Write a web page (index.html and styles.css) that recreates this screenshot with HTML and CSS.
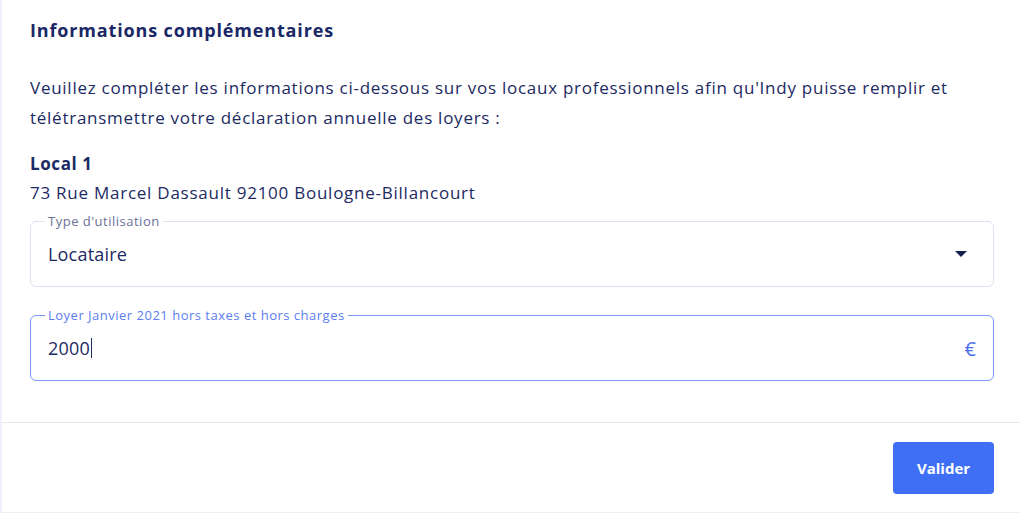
FILE: index.html
```html
<!DOCTYPE html>
<html lang="fr">
<head>
<meta charset="utf-8">
<title>Informations complémentaires</title>
<link rel="stylesheet" href="styles.css">
</head>
<body>
<div class="dialog">
  <div class="content">
    <h2 class="title">Informations complémentaires</h2>
    <p class="intro">Veuillez compléter les informations ci-dessous sur vos locaux professionnels afin qu'Indy puisse remplir et télétransmettre votre déclaration annuelle des loyers :</p>
    <div class="local">
      <div class="local-name">Local 1</div>
      <div class="local-address">73 Rue Marcel Dassault 92100 Boulogne-Billancourt</div>
    </div>
    <div class="field">
      <span class="field-label">Type d'utilisation</span>
      <span class="field-value">Locataire</span>
      <svg class="caret" width="12" height="6" viewBox="0 0 12 6"><path d="M0 0h12L6 6z" fill="#14204f"/></svg>
    </div>
    <div class="field field-active">
      <span class="field-label">Loyer Janvier 2021 hors taxes et hors charges</span>
      <span class="field-value">2000<span class="cursor"></span></span>
      <span class="euro">€</span>
    </div>
  </div>
  <div class="footer">
    <button class="btn">Valider</button>
  </div>
</div>
</body>
</html>
```
FILE: styles.css
```css
* { box-sizing: border-box; }
html, body { margin: 0; padding: 0; background: #fff; }
body {
  font-family: "Open Sans", "Noto Sans", sans-serif;
  color: #1c2a63;
  width: 1020px;
  height: 514px;
  overflow: hidden;
}
.dialog {
  height: 513px;
  border-left: 2px solid #eff0fb;
  border-bottom: 1px solid #eeeff6;
  display: flex;
  flex-direction: column;
}
.content {
  padding: 16px 26px 0 28px;
  height: 423px;
  border-bottom: 1px solid #e6e7f1;
}
.title {
  margin: 0;
  font-size: 18px;
  font-weight: 700;
  line-height: 28px;
  letter-spacing: 0.85px;
  color: #1a2766;
}
.intro {
  margin: 29px 0 0;
  font-size: 17px;
  line-height: 30px;
  letter-spacing: 0.74px;
  font-weight: 500;
}
.local { margin-top: 18px; font-size: 17px; line-height: 28px; letter-spacing: 0.75px; }
.local-name { font-weight: 700; line-height: 26px; letter-spacing: 0.6px; }
.local-address { margin-top: 2px; }
.field {
  position: relative;
  margin-top: 14px;
  padding: 0 17px 0 17px;
  border: 1px solid #dcdff0;
  border-radius: 6px;
  height: 66px;
  display: flex;
  align-items: center;
  justify-content: space-between;
}
.field + .field { margin-top: 28px; }
.field-label {
  position: absolute;
  left: 14px;
  top: -8px;
  padding: 0 3px;
  background: #fff;
  font-size: 13px;
  line-height: 14px;
  letter-spacing: 0.5px;
  color: #6a7196;
  font-weight: 500;
}
.field-value { font-size: 18px; font-weight: 500; letter-spacing: 0.2px; color: #1c2a63; display: inline-flex; align-items: center; }
.caret { margin-right: 9px; }
.field-active { border-color: #7c97f7; }
.field-active .field-label { color: #5c7df2; }
.cursor { display: inline-block; width: 1px; height: 20px; background: #1c2a63; margin-left: 1px; }
.euro { color: #4d6ff0; font-size: 20px; }
.footer {
  flex: 1;
  display: flex;
  justify-content: flex-end;
  align-items: flex-start;
  padding: 19px 26px 0 0;
}
.btn {
  width: 101px;
  height: 52px;
  background: #3e6ff4;
  color: #fff;
  border: 0;
  border-radius: 4px;
  font-family: inherit;
  font-size: 15px;
  font-weight: 700;
}
```
